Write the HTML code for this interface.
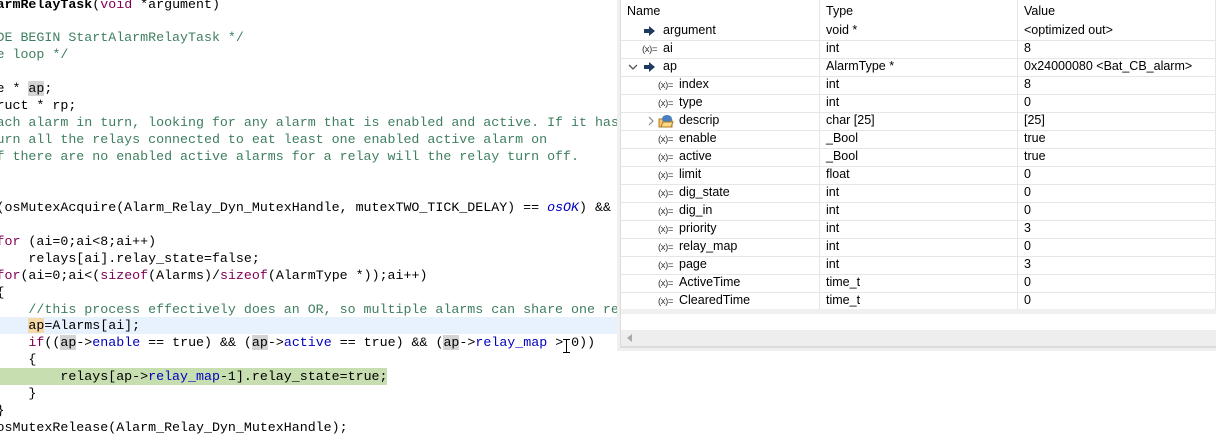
<!DOCTYPE html>
<html><head><meta charset="utf-8">
<style>
html,body{margin:0;padding:0;width:1216px;height:436px;overflow:hidden;background:#fff;position:relative}
.code{position:absolute;left:0;top:0;width:620px;height:436px;font-family:"Liberation Mono","Courier New",monospace;font-size:13.3px;color:#000}
.ln{position:absolute;left:-3.5px;height:17px;line-height:17px;white-space:pre}
.c{color:#3f7f5f}
.k{color:#7f0055}
.f{color:#0000c0}
.it{color:#0000c0;font-style:italic}
.o{background:#d4d4d4}
.panel{position:absolute;left:617px;top:0;width:599px;height:351px;background:#f0f0f0}
.inner{position:absolute;left:3px;top:0;right:0;height:347px;background:#fff;border-left:1px solid #dcdcdc;border-bottom:1px solid #dcdcdc}
.hdr{position:absolute;top:0;height:22px;line-height:22px;font-family:"Liberation Sans",sans-serif;font-size:12.5px;color:#000}
.row{position:absolute;left:0;right:0;height:18px;border-bottom:1px solid #e6e6e6;font-family:"Liberation Sans",sans-serif;font-size:12.5px;line-height:17px}
.row span{position:absolute;top:0}
.vl{position:absolute;top:0;width:1px;height:309px;background:#e6e6e6}
.x{font-size:9.5px;color:#333;letter-spacing:-0.4px}
</style></head><body>
<div class="code">
<div style="position:absolute;left:0;top:317px;width:620px;height:17px;background:#e8f2fe"></div>
<div style="position:absolute;left:0;top:368px;width:387px;height:17px;background:#c7dfb0"></div>
<div class="ln" style="top:-4px;font-weight:bold">armRelayTask<span style="font-weight:normal">(<span class="k">void</span> *argument)</span></div>
<div class="ln c" style="top:29px">DE BEGIN StartAlarmRelayTask */</div>
<div class="ln c" style="top:46px">e loop */</div>
<div class="ln" style="top:80px">e * <span class="o">ap</span>;</div>
<div class="ln" style="top:97px">ruct * rp;</div>
<div class="ln c" style="top:114px">ach alarm in turn, looking for any alarm that is enabled and active. If it has</div>
<div class="ln c" style="top:131px">urn all the relays connected to eat least one enabled active alarm on</div>
<div class="ln c" style="top:148px">f there are no enabled active alarms for a relay will the relay turn off.</div>
<div class="ln" style="top:199px">(osMutexAcquire(Alarm_Relay_Dyn_MutexHandle, mutexTWO_TICK_DELAY) == <span class="it">osOK</span>) &amp;&amp;</div>
<div class="ln" style="top:233px"><span class="k">for</span> (ai=0;ai&lt;8;ai++)</div>
<div class="ln" style="top:250px">    relays[ai].relay_state=false;</div>
<div class="ln" style="top:267px"><span class="k">for</span>(ai=0;ai&lt;(<span class="k">sizeof</span>(Alarms)/<span class="k">sizeof</span>(AlarmType *));ai++)</div>
<div class="ln" style="top:284px">{</div>
<div class="ln c" style="top:301px">    //this process effectively does an OR, so multiple alarms can share one re</div>
<div class="ln" style="top:317px">    <span style="background:#f5d9a8">ap</span>=Alarms[ai];</div>
<div class="ln" style="top:334px">    <span class="k">if</span>((<span class="o">ap</span>-&gt;<span class="f">enable</span> == true) &amp;&amp; (<span class="o">ap</span>-&gt;<span class="f">active</span> == true) &amp;&amp; (<span class="o">ap</span>-&gt;<span class="f">relay_map</span> &gt; 0))</div>
<div class="ln" style="top:351px">    {</div>
<div class="ln" style="top:368px">        relays[ap-&gt;<span class="f">relay_map</span>-1].relay_state=true;</div>
<div class="ln" style="top:385px">    }</div>
<div class="ln" style="top:402px">}</div>
<div class="ln" style="top:419px">osMutexRelease(Alarm_Relay_Dyn_MutexHandle);</div>
<div style="position:absolute;left:566px;top:339px;width:1px;height:14px;background:#000"></div>
<div style="position:absolute;left:563px;top:339px;width:7px;height:1px;background:#000"></div>
<div style="position:absolute;left:563px;top:352px;width:7px;height:1px;background:#000"></div>
</div>

<div class="panel"><div class="inner">
<div class="hdr" style="left:6px">Name</div>
<div class="hdr" style="left:205px">Type</div>
<div class="hdr" style="left:403px">Value</div>
<div id="rows"></div>
<div class="vl" style="left:198px"></div>
<div class="vl" style="left:396px"></div>
<div class="vl" style="left:594px"></div>
<div style="position:absolute;left:0;right:0;top:309px;height:5px;background:#f0f0f0"></div>
<div style="position:absolute;left:0;right:0;top:330px;height:16px;background:#eeeeee;border-bottom:1px solid #dcdcdc"></div>
<div style="position:absolute;left:6px;top:334px;width:0;height:0;border-top:4px solid transparent;border-bottom:4px solid transparent;border-right:5px solid #aaa"></div>
</div></div>

<script>
var data=[
["a","argument","void *","&lt;optimized out&gt;",0],
["x","ai","int","8",0],
["e","ap","AlarmType *","0x24000080 &lt;Bat_CB_alarm&gt;",0],
["x","index","int","8",1],
["x","type","int","0",1],
["f","descrip","char [25]","[25]",1],
["x","enable","_Bool","true",1],
["x","active","_Bool","true",1],
["x","limit","float","0",1],
["x","dig_state","int","0",1],
["x","dig_in","int","0",1],
["x","priority","int","3",1],
["x","relay_map","int","0",1],
["x","page","int","3",1],
["x","ActiveTime","time_t","0",1],
["x","ClearedTime","time_t","0",1]];
var h="";
data.forEach(function(d,i){
 var top=22+i*18, ind=d[4]?16:0, ic="", nx=41+ind;
 var arrow='<svg width="11" height="10" style="position:absolute;top:4px;left:23px" viewBox="0 0 11 10"><path d="M0 3h5V0l6 5-6 5V7H0z" fill="#1f3a5f"/></svg>';
 if(d[0]=="a") ic=arrow;
 if(d[0]=="e") ic='<svg width="10" height="8" style="position:absolute;top:5px;left:7px" viewBox="0 0 10 8"><path d="M1 2l4 4 4-4" fill="none" stroke="#555" stroke-width="1.3"/></svg>'+arrow;
 if(d[0]=="x") ic='<span class="x" style="left:'+(21+ind)+'px;top:1px">(x)=</span>';
 if(d[0]=="f"){ic='<svg width="8" height="10" style="position:absolute;top:4px;left:26px" viewBox="0 0 8 10"><path d="M2 1l4 4-4 4" fill="none" stroke="#888" stroke-width="1.2"/></svg><svg width="16" height="14" style="position:absolute;top:2px;left:37px" viewBox="0 0 16 14"><path d="M1 5h5l1 1h7v7H1z" fill="#f5c86a" stroke="#b07a20"/><ellipse cx="9" cy="5" rx="5" ry="4" fill="#4a7fc0"/><path d="M3 13l2-5h10l-2 5z" fill="#fbd98a" stroke="#b07a20"/></svg>';nx=57;}
 h+='<div class="row" style="top:'+top+'px">'+ic+'<span style="left:'+(nx+1)+'px">'+d[1]+'</span><span style="left:205px">'+d[2]+'</span><span style="left:403px">'+d[3]+'</span></div>';
});
document.getElementById("rows").innerHTML=h;
</script>
</body></html>
